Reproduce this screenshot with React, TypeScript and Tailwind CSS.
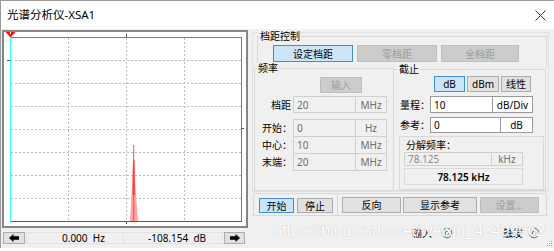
import React from 'react'

const FONT = "font-['Noto_Sans','Noto_Sans_CJK_SC',sans-serif]"

// Windows-style push button
function Btn({ className, children, kind = 'normal' }: { className: string; children: React.ReactNode; kind?: 'normal' | 'active' | 'disabled' }) {
  const look =
    kind === 'active'
      ? 'bg-[#cce4f7] border-[#3d8ed4] text-black'
      : kind === 'disabled'
        ? 'bg-[#cccccc] border-[#bfbfbf] text-[#9d9d9d]'
        : 'bg-[#e1e1e1] border-[#adadad] text-black'
  return (
    <div className={`flex items-center justify-center border text-[10px] leading-none ${look} ${className}`}>
      {children}
    </div>
  )
}

function Field({ className, children, enabled = false }: { className: string; children: React.ReactNode; enabled?: boolean }) {
  return (
    <div
      className={`flex items-center border px-[3px] text-[10px] leading-none ${
        enabled ? 'bg-white border-[#9a9a9a] text-black' : 'bg-[#f0f0f0] border-[#cfcfcf] text-[#6d6d6d]'
      } ${className}`}
    >
      {children}
    </div>
  )
}

function Unit({ className, children, enabled = false }: { className: string; children: React.ReactNode; enabled?: boolean }) {
  return (
    <div
      className={`flex items-center justify-center border border-l-0 text-[10px] leading-none ${
        enabled ? 'bg-white border-[#9a9a9a] text-black' : 'bg-[#f0f0f0] border-[#cfcfcf] text-[#6d6d6d]'
      } ${className}`}
    >
      {children}
    </div>
  )
}

function Legend({ children, className }: { children: React.ReactNode; className: string }) {
  return (
    <span className={`absolute -top-[7px] bg-[#f0f0f0] px-[1px] text-[10px] leading-[12px] text-black ${className}`}>{children}</span>
  )
}

function Plot() {
  const vLines = [64.5, 122.5, 180.5]
  const hLines = [28.5, 51.5, 74.5, 97.5, 120.5, 143.5, 166.5]
  return (
    <svg width="242" height="194" viewBox="0 0 242 194" className="block">
      {vLines.map((x) => (
        <line key={x} x1={x} y1={6} x2={x} y2={189} stroke="#b9b9b9" strokeDasharray="2 2" />
      ))}
      {hLines.map((y) => (
        <line key={y} x1={7} y1={y} x2={237} y2={y} stroke="#b9b9b9" strokeDasharray="2 2" />
      ))}
      {/* plot frame */}
      <line x1={6} y1={5.5} x2={238} y2={5.5} stroke="#7a7a7a" />
      <line x1={237.5} y1={5} x2={237.5} y2={190} stroke="#7a7a7a" />
      <line x1={6} y1={189.5} x2={238} y2={189.5} stroke="#5a5a5a" />
      {/* ticks */}
      <line x1={122.5} y1={2} x2={122.5} y2={5} stroke="#555" />
      <line x1={3} y1={28.5} x2={6} y2={28.5} stroke="#555" />
      <line x1={237} y1={96.5} x2={240} y2={96.5} stroke="#555" />
      <line x1={122.5} y1={189} x2={122.5} y2={192} stroke="#555" />
      {/* spectrum spike */}
      <polygon points="126,189 127.5,163 129,128 130,128 132,163 134,189" fill="#ffa3a3" />
      <polygon points="128.5,163 129,128 130.5,128 131,163" fill="#ff4a4a" />
      <line x1={129.7} y1={113} x2={129.7} y2={189} stroke="#ff3b3b" strokeWidth="0.9" />
      {/* cursor */}
      <line x1={6.5} y1={3} x2={6.5} y2={190} stroke="#3ff" strokeWidth="1.2" />
      <polygon points="1.5,0 11.5,0 6.5,5.5" fill="#ff1010" />
      <line x1={6.5} y1={0} x2={6.5} y2={2} stroke="#fff" />
    </svg>
  )
}

function Arrow({ dir }: { dir: 'left' | 'right' }) {
  return (
    <svg width="10" height="8" viewBox="0 0 10 8" className={dir === 'right' ? 'rotate-180' : ''}>
      <polygon points="0,4 4.5,0 4.5,2.3 10,2.3 10,5.7 4.5,5.7 4.5,8" fill="#000" />
    </svg>
  )
}

function Terminal() {
  return (
    <svg width="12" height="12" viewBox="0 0 12 12">
      <circle cx="6" cy="6" r="4.8" fill="none" stroke="#6a6a6a" strokeWidth="1" />
      <circle cx="6" cy="6" r="1.8" fill="none" stroke="#6a6a6a" strokeWidth="1" />
    </svg>
  )
}

export default function App() {
  return (
    <div className={`w-[554px] h-[251px] overflow-hidden bg-white ${FONT}`}>
      <div className="flex h-[248px] w-[554px] flex-col border-l border-t border-[#9a9a9a]">
        {/* Title bar */}
        <div className="flex h-[28px] items-center justify-between bg-white pl-[6px] pr-[8px]">
          <span className="text-[11.5px] leading-none text-black">光谱分析仪-XSA1</span>
          <svg width="11" height="11" viewBox="0 0 11 11">
            <path d="M0.5 0.5 L10.5 10.5 M10.5 0.5 L0.5 10.5" stroke="#333" strokeWidth="1" />
          </svg>
        </div>

        {/* Body */}
        <div className="relative flex flex-1 bg-[#f0f0f0] pl-[1px] pt-[1px]">
          {/* Left: graph */}
          <div className="flex w-[246px] flex-col">
            <div className="h-[198px] border-2 border-[#858585] bg-white">
              <Plot />
            </div>
            <div className="mt-[4px] flex h-[12px] pl-[1px]">
              <Btn className="w-[22px] h-[12px]">
                <Arrow dir="left" />
              </Btn>
              <div className="ml-[1px] flex w-[98px] items-center whitespace-pre border border-[#e2e2e2] pl-[35px] text-[10px] leading-none text-black">
                0.000  Hz
              </div>
              <div className="flex w-[99px] items-center whitespace-pre border border-l-0 border-[#e2e2e2] pl-[24px] text-[10px] leading-none text-black">
                -108.154  dB
              </div>
              <Btn className="ml-[1px] w-[21px] h-[12px]">
                <Arrow dir="right" />
              </Btn>
            </div>
          </div>

          {/* Right: controls */}
          <div className="ml-[4px] flex w-[300px] flex-col">
            <div className="mt-[2px] h-[160px] w-[297px] border border-[#e2e2e2]">
              {/* 档距控制 */}
              <div className="relative ml-[4px] mt-[3px] h-[31px] w-[290px] border-x border-t border-[#d9d9d9]">
                <Legend className="left-[1px]">档距控制</Legend>
                <div className="flex gap-[4px] pl-[15px] pt-[8px]">
                  <Btn kind="active" className="w-[80px] h-[17px]">设定档距</Btn>
                  <Btn kind="disabled" className="w-[80px] h-[17px]">零档距</Btn>
                  <Btn kind="disabled" className="w-[78px] h-[17px]">全档距</Btn>
                </div>
              </div>

              <div className="flex">
                {/* 频率 */}
                <div className="relative ml-[1px] mt-[1px] flex h-[123px] w-[140px] flex-col border border-[#d9d9d9]">
                  <Legend className="left-[2px]">频率</Legend>
                  <Btn kind="disabled" className="ml-[65px] mt-[8px] w-[42px] h-[16px]">输入</Btn>
                  <div className="mt-[3px] flex h-[17px]">
                    <span className="flex w-[38px] items-center justify-end pr-[2px] text-[10px] leading-none">档距</span>
                    <Field className="w-[63px]">20</Field>
                    <Unit className="w-[31px]">MHz</Unit>
                  </div>
                  <div className="mt-[6px] flex h-[18px]">
                    <span className="flex w-[38px] items-center justify-end pr-[1px] text-[10px] leading-none">开始：</span>
                    <Field className="w-[63px]">0</Field>
                    <Unit className="w-[31px]">Hz</Unit>
                  </div>
                  <div className="-mt-px flex h-[18px]">
                    <span className="flex w-[38px] items-center justify-end pr-[1px] text-[10px] leading-none">中心：</span>
                    <Field className="w-[63px]">10</Field>
                    <Unit className="w-[31px]">MHz</Unit>
                  </div>
                  <div className="-mt-px flex h-[18px]">
                    <span className="flex w-[38px] items-center justify-end pr-[1px] text-[10px] leading-none">末端：</span>
                    <Field className="w-[63px]">20</Field>
                    <Unit className="w-[31px]">MHz</Unit>
                  </div>
                </div>

                {/* 截止 */}
                <div className="relative mt-[2px] flex h-[122px] w-[152px] flex-col border border-l-0 border-[#d9d9d9]">
                  <Legend className="left-[4px]">截止</Legend>
                  <div className="ml-[40px] mt-[6px] flex gap-[2px]">
                    <Btn kind="active" className="w-[31px] h-[16px]">dB</Btn>
                    <Btn className="w-[32px] h-[16px]">dBm</Btn>
                    <Btn className="w-[30px] h-[16px]">线性</Btn>
                  </div>
                  <div className="mt-[4px] flex h-[17px]">
                    <span className="flex w-[36px] items-center justify-end text-[10px] leading-none">量程：</span>
                    <Field enabled className="w-[63px]">10</Field>
                    <Unit enabled className="w-[40px]">dB/Div</Unit>
                  </div>
                  <div className="mt-[4px] flex h-[16px]">
                    <span className="flex w-[36px] items-center justify-end text-[10px] leading-none">参考：</span>
                    <Field enabled className="w-[71px]">0</Field>
                    <Unit enabled className="w-[32px]">dB</Unit>
                  </div>
                  <div className="ml-[5px] mt-[3px] flex h-[54px] w-[145px] flex-col border border-[#d9d9d9]">
                    <span className="ml-[6px] mt-[2px] text-[10px] leading-[12px]">分解频率：</span>
                    <div className="ml-[4px] mt-[1px] flex h-[14px]">
                      <Field className="w-[88px] text-[#8a8a8a]">78.125</Field>
                      <Unit className="w-[31px]">kHz</Unit>
                    </div>
                    <div className="ml-[4px] mt-[2px] flex h-[17px] w-[119px] items-center justify-center border border-[#d9d9d9] text-[10px] font-semibold leading-none">
                      78.125 kHz
                    </div>
                  </div>
                </div>
              </div>
            </div>

            {/* Bottom buttons */}
            <div className="mt-[1px] flex h-[23px]">
              <div className="ml-[1px] flex w-[85px] gap-[3px] border border-[#d9d9d9] pl-[5px] pt-[4px]">
                <Btn kind="active" className="w-[35px] h-[15px]">开始</Btn>
                <Btn className="w-[36px] h-[15px]">停止</Btn>
              </div>
              <div className="flex w-[209px] border border-l-0 border-[#d9d9d9] pl-[4px] pt-[3px]">
                <Btn className="w-[59px] h-[16px]">反向</Btn>
                <Btn className="ml-[2px] w-[74px] h-[16px]">显示参考</Btn>
                <Btn kind="disabled" className="ml-[3px] w-[59px] h-[16px]">设置...</Btn>
              </div>
            </div>

            {/* Terminals */}
            <div className="mt-[10px] flex h-[14px] items-center">
              <span className="ml-[160px] text-[10px] leading-none">输入</span>
              <span className="ml-[9px]"><Terminal /></span>
              <span className="ml-[50px] text-[10px] leading-none">触发</span>
              <span className="ml-[5px]"><Terminal /></span>
            </div>
          </div>

          {/* CSDN watermark */}
          <span className="pointer-events-none absolute left-[272px] top-[194px] whitespace-nowrap font-['Liberation_Sans',sans-serif] text-[16px] leading-none text-white [text-shadow:0_0_1px_rgba(0,0,0,0.28)]">
            https://blog.csdn.net/weixin_43499062
          </span>

          {/* resize grip */}
          <svg width="7" height="7" viewBox="0 0 7 7" className="absolute bottom-[1px] right-[1px]">
            <rect x="5" y="1" width="1" height="1" fill="#a0a0a0" />
            <rect x="3" y="3" width="1" height="1" fill="#a0a0a0" />
            <rect x="5" y="3" width="1" height="1" fill="#a0a0a0" />
            <rect x="1" y="5" width="1" height="1" fill="#a0a0a0" />
            <rect x="3" y="5" width="1" height="1" fill="#a0a0a0" />
            <rect x="5" y="5" width="1" height="1" fill="#a0a0a0" />
          </svg>
        </div>
      </div>
    </div>
  )
}
